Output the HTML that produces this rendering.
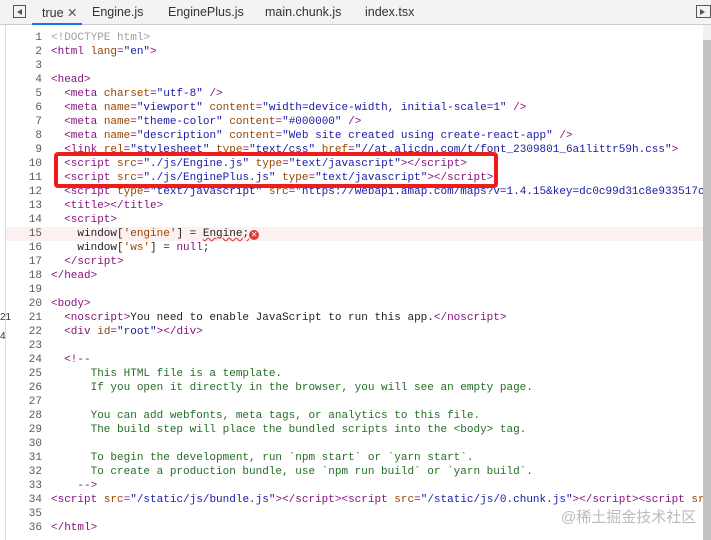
<!DOCTYPE html>
<html><head><meta charset="utf-8"><style>
*{margin:0;padding:0;box-sizing:border-box}
body{width:711px;height:540px;overflow:hidden;background:#fff;position:relative;font-family:"Liberation Sans",sans-serif}
.tabs{position:absolute;left:0;top:0;width:711px;height:25px;background:#f3f3f3;border-bottom:1px solid #cbcdd1}
.tab{position:absolute;top:5px;font-size:12.5px;color:#333}
.ul{position:absolute;left:32px;top:23px;width:50px;height:2px;background:#1a73e8}
.ic{position:absolute;top:5px;width:13px;height:13px;border:1px solid #555}
.code{position:absolute;left:0;top:31px;width:703px;height:509px;overflow:hidden;font-family:"Liberation Mono",monospace;font-size:11px}
.ln{height:14px;line-height:14px;white-space:pre;position:relative}
.n{display:inline-block;width:42px;text-align:right;color:#5a5a5a;margin-right:9px}
.t{color:#881280}.a{color:#994500}.v{color:#1a1aa6}.c{color:#236e25}.g{color:#a0a0a0}.k{color:#222}
.hl{background:#fdf0f0}
.box{position:absolute;left:54px;top:152px;width:444px;height:36px;border:4px solid #f01b1b;border-radius:4px}
.sb{position:absolute;left:703px;top:25px;width:8px;height:515px;background:#f1f1f1}
.th{position:absolute;left:703px;top:40px;width:8px;height:500px;background:#c1c1c1}
.left{position:absolute;left:0;top:25px;width:6px;height:515px;border-right:1px solid #ddd;background:#fff}
.err{display:inline-block;width:10px;height:10px;border-radius:50%;background:#e0393e;color:#fff;font-size:8px;line-height:10px;text-align:center;vertical-align:-1px;font-family:"Liberation Sans",sans-serif}
.wm{position:absolute;left:561px;top:506px;font-family:"Liberation Sans","Noto Sans CJK SC",sans-serif;font-size:15px;color:rgba(170,170,170,.8)}
</style></head><body>
<div class="tabs">
<div class="ic" style="left:13px"></div><div style="position:absolute;left:17px;top:9px;width:0;height:0;border-top:3px solid transparent;border-bottom:3px solid transparent;border-right:5px solid #555"></div>
<div class="tab" style="left:42px">true <span style="color:#555">✕</span></div>
<div class="tab" style="left:92px">Engine.js</div>
<div class="tab" style="left:168px">EnginePlus.js</div>
<div class="tab" style="left:265px">main.chunk.js</div>
<div class="tab" style="left:365px">index.tsx</div>
<div class="ic" style="left:696px;width:15px"></div><div style="position:absolute;left:700px;top:9px;width:0;height:0;border-top:3px solid transparent;border-bottom:3px solid transparent;border-left:5px solid #555"></div>
<div class="ul"></div>
</div>
<div class="sb"></div><div class="th"></div>
<div class="code">
<div class="ln"><span class="n">1</span><span class="g">&lt;!DOCTYPE html&gt;</span></div>
<div class="ln"><span class="n">2</span><span class="t">&lt;html </span><span class="a">lang</span><span class="t">=</span><span class="v">"en"</span><span class="t">&gt;</span></div>
<div class="ln"><span class="n">3</span></div>
<div class="ln"><span class="n">4</span><span class="t">&lt;head&gt;</span></div>
<div class="ln"><span class="n">5</span>  <span class="t">&lt;meta </span><span class="a">charset</span><span class="t">=</span><span class="v">"utf-8"</span><span class="t"> /&gt;</span></div>
<div class="ln"><span class="n">6</span>  <span class="t">&lt;meta </span><span class="a">name</span><span class="t">=</span><span class="v">"viewport"</span> <span class="a">content</span><span class="t">=</span><span class="v">"width=device-width, initial-scale=1"</span><span class="t"> /&gt;</span></div>
<div class="ln"><span class="n">7</span>  <span class="t">&lt;meta </span><span class="a">name</span><span class="t">=</span><span class="v">"theme-color"</span> <span class="a">content</span><span class="t">=</span><span class="v">"#000000"</span><span class="t"> /&gt;</span></div>
<div class="ln"><span class="n">8</span>  <span class="t">&lt;meta </span><span class="a">name</span><span class="t">=</span><span class="v">"description"</span> <span class="a">content</span><span class="t">=</span><span class="v">"Web site created using create-react-app"</span><span class="t"> /&gt;</span></div>
<div class="ln"><span class="n">9</span>  <span class="t">&lt;link </span><span class="a">rel</span><span class="t">=</span><span class="v">"stylesheet"</span> <span class="a">type</span><span class="t">=</span><span class="v">"text/css"</span> <span class="a">href</span><span class="t">=</span><span class="v">"//at.alicdn.com/t/font_2309801_6a1littr59h.css"</span><span class="t">&gt;</span></div>
<div class="ln"><span class="n">10</span>  <span class="t">&lt;script </span><span class="a">src</span><span class="t">=</span><span class="v">"./js/Engine.js"</span> <span class="a">type</span><span class="t">=</span><span class="v">"text/javascript"</span><span class="t">&gt;&lt;/script&gt;</span></div>
<div class="ln"><span class="n">11</span>  <span class="t">&lt;script </span><span class="a">src</span><span class="t">=</span><span class="v">"./js/EnginePlus.js"</span> <span class="a">type</span><span class="t">=</span><span class="v">"text/javascript"</span><span class="t">&gt;&lt;/script&gt;</span></div>
<div class="ln"><span class="n">12</span>  <span class="t">&lt;script </span><span class="a">type</span><span class="t">=</span><span class="v">"text/javascript"</span> <span class="a">src</span><span class="t">=</span><span class="v">"https://webapi.amap.com/maps?v=1.4.15&amp;key=dc0c99d31c8e933517c</span></div>
<div class="ln"><span class="n">13</span>  <span class="t">&lt;title&gt;&lt;/title&gt;</span></div>
<div class="ln"><span class="n">14</span>  <span class="t">&lt;script&gt;</span></div>
<div class="ln hl"><span class="n">15</span>    <span class="k">window[</span><span class="a">'engine'</span><span class="k">] = <span style="text-decoration:underline wavy #e04040">Engine;</span></span><span class="err">✕</span></div>
<div class="ln"><span class="n">16</span>    <span class="k">window[</span><span class="a">'ws'</span><span class="k">] = </span><span class="t">null</span><span class="k">;</span></div>
<div class="ln"><span class="n">17</span>  <span class="t">&lt;/script&gt;</span></div>
<div class="ln"><span class="n">18</span><span class="t">&lt;/head&gt;</span></div>
<div class="ln"><span class="n">19</span></div>
<div class="ln"><span class="n">20</span><span class="t">&lt;body&gt;</span></div>
<div class="ln"><span class="n">21</span>  <span class="t">&lt;noscript&gt;</span><span class="k">You need to enable JavaScript to run this app.</span><span class="t">&lt;/noscript&gt;</span></div>
<div class="ln"><span class="n">22</span>  <span class="t">&lt;div </span><span class="a">id</span><span class="t">=</span><span class="v">"root"</span><span class="t">&gt;&lt;/div&gt;</span></div>
<div class="ln"><span class="n">23</span></div>
<div class="ln"><span class="n">24</span>  <span class="t">&lt;!--</span></div>
<div class="ln"><span class="n">25</span><span class="c">      This HTML file is a template.</span></div>
<div class="ln"><span class="n">26</span><span class="c">      If you open it directly in the browser, you will see an empty page.</span></div>
<div class="ln"><span class="n">27</span></div>
<div class="ln"><span class="n">28</span><span class="c">      You can add webfonts, meta tags, or analytics to this file.</span></div>
<div class="ln"><span class="n">29</span><span class="c">      The build step will place the bundled scripts into the &lt;body&gt; tag.</span></div>
<div class="ln"><span class="n">30</span></div>
<div class="ln"><span class="n">31</span><span class="c">      To begin the development, run `npm start` or `yarn start`.</span></div>
<div class="ln"><span class="n">32</span><span class="c">      To create a production bundle, use `npm run build` or `yarn build`.</span></div>
<div class="ln"><span class="n">33</span><span class="t">    --&gt;</span></div>
<div class="ln"><span class="n">34</span><span class="t">&lt;script </span><span class="a">src</span><span class="t">=</span><span class="v">"/static/js/bundle.js"</span><span class="t">&gt;&lt;/script&gt;&lt;script </span><span class="a">src</span><span class="t">=</span><span class="v">"/static/js/0.chunk.js"</span><span class="t">&gt;&lt;/script&gt;&lt;script </span><span class="a">sr</span></div>
<div class="ln"><span class="n">35</span></div>
<div class="ln"><span class="n">36</span><span class="t">&lt;/html&gt;</span></div>
</div>
<div class="left"><div style="position:absolute;top:287px;left:0;font-size:10px;color:#333">21</div><div style="position:absolute;top:306px;left:0;font-size:10px;color:#333">4</div></div>
<div class="box"></div>
<div class="wm">@稀土掘金技术社区</div>
</body></html>
